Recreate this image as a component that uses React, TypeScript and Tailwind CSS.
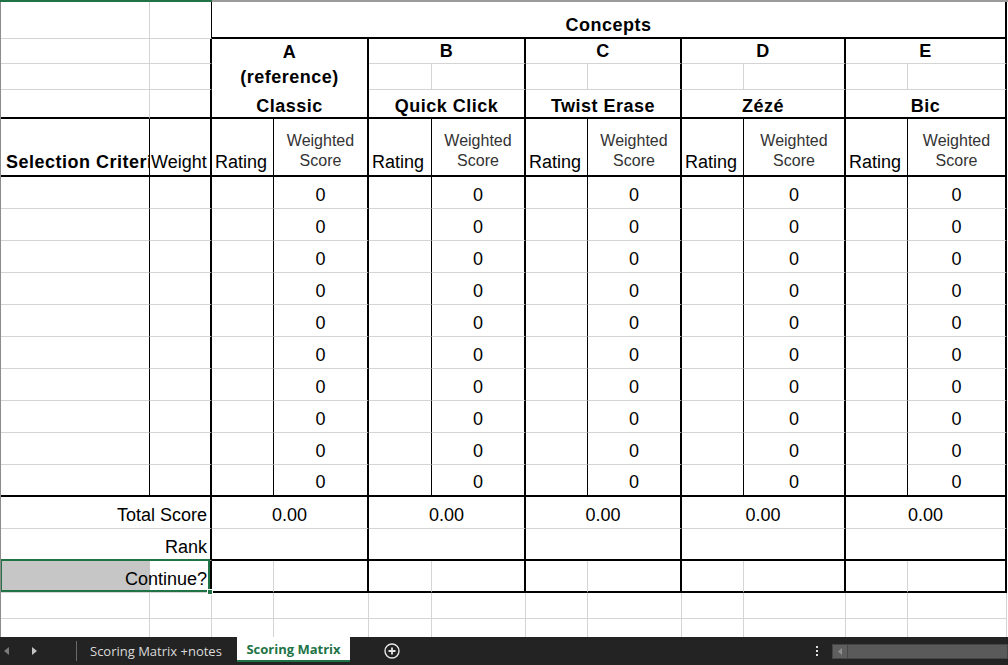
import React from "react";

const concepts = [
  { letter: "B", name: "Quick Click" },
  { letter: "C", name: "Twist Erase" },
  { letter: "D", name: "Zézé" },
  { letter: "E", name: "Bic" },
];

const Cell = ({ cls = "", children }: { cls?: string; children?: React.ReactNode }) => (
  <div className={`flex overflow-hidden whitespace-nowrap ${cls}`}>{children}</div>
);

const grey = "border-r border-b border-[#d4d4d4]";
const bold = "font-bold tracking-[0.5px]";

const App = () => {
  const rows = Array.from({ length: 10 });

  return (
    <div className="w-[1008px] h-[665px] overflow-hidden bg-white flex flex-col font-['Liberation_Sans',Arial,sans-serif] text-[18px] leading-[20px] text-black">
      {/* column header edge */}
      <div className="flex h-[2px] shrink-0">
        <div className="w-[212px] bg-[#217346]" />
        <div className="flex-1 bg-[#9b9b9b]" />
      </div>

      {/* sheet */}
      <div className="flex-1 overflow-hidden border-l border-[#8c8c8c]">
        <div className="grid grid-cols-[149px_62px_62px_95px_63px_94px_62px_94px_62px_102px_62px_99px] grid-rows-[37px_25px_26px_29px_58px_repeat(10,32px)_32px_32px_32px_26px_26px]">
          {/* row 1 */}
          <Cell cls={grey} />
          <Cell cls="border-b border-b-[#d4d4d4] border-r border-r-black" />
          <Cell cls={`col-span-10 border-r-2 border-b-2 border-black justify-center items-end pb-[2px] ${bold}`}>Concepts</Cell>

          {/* row 2 */}
          <Cell cls={grey} />
          <Cell cls="border-b border-b-[#d4d4d4] border-r-2 border-r-black" />
          <Cell cls={`col-span-2 row-span-3 border-r-2 border-b-2 border-black flex-col ${bold}`}>
            <div className="h-[25px] flex items-end justify-center pb-[2px]">A</div>
            <div className="h-[26px] flex items-end justify-center pb-[3px]">(reference)</div>
            <div className="h-[27px] flex items-end justify-center pb-[1px]">Classic</div>
          </Cell>
          {concepts.map((c) => (
            <Cell key={c.letter} cls={`col-span-2 border-r-2 border-r-black border-b border-b-[#d4d4d4] justify-center items-end pb-[2px] ${bold}`}>
              {c.letter}
            </Cell>
          ))}

          {/* row 3 */}
          <Cell cls={grey} />
          <Cell cls="border-b border-b-[#d4d4d4] border-r-2 border-r-black" />
          {concepts.map((c) => (
            <React.Fragment key={c.letter}>
              <Cell cls={grey} />
              <Cell cls="border-r-2 border-r-black border-b border-b-[#d4d4d4]" />
            </React.Fragment>
          ))}

          {/* row 4 */}
          <Cell cls="border-r border-r-[#d4d4d4] border-b-2 border-b-black" />
          <Cell cls="border-r-2 border-b-2 border-black" />
          {concepts.map((c) => (
            <Cell key={c.letter} cls={`col-span-2 border-r-2 border-b-2 border-black justify-center items-end pb-[1px] ${bold}`}>
              {c.name}
            </Cell>
          ))}

          {/* header */}
          <Cell cls={`border-r border-r-black border-b-2 border-b-black items-end pb-[3px] pl-[5px] ${bold}`}>Selection Criteria</Cell>
          <Cell cls="border-r-2 border-b-2 border-black items-end pb-[3px] pl-[1px]">Weight</Cell>
          {[0, 1, 2, 3, 4].map((i) => (
            <React.Fragment key={i}>
              <Cell cls="border-r border-b-2 border-black items-end pb-[3px] pl-[3px]">Rating</Cell>
              <Cell cls="border-r-2 border-b-2 border-black flex-col justify-end items-center pb-[4px] text-[16px] leading-[20px] text-[#333]">
                <span>Weighted</span>
                <span>Score</span>
              </Cell>
            </React.Fragment>
          ))}

          {/* data rows */}
          {rows.map((_, r) => {
            const last = r === rows.length - 1;
            const b = last ? "border-b-2 border-b-black" : "border-b border-b-[#d4d4d4]";
            return (
              <React.Fragment key={r}>
                <Cell cls={`border-r border-r-black ${b}`} />
                <Cell cls={`border-r-2 border-r-black ${b}`} />
                {[0, 1, 2, 3, 4].map((i) => (
                  <React.Fragment key={i}>
                    <Cell cls={`border-r border-r-black ${b}`} />
                    <Cell cls={`border-r-2 border-r-black ${b} justify-center items-end pb-[3px]`}>0</Cell>
                  </React.Fragment>
                ))}
              </React.Fragment>
            );
          })}

          {/* total score */}
          <Cell cls="col-span-2 border-r-2 border-r-black border-b border-b-[#d4d4d4] justify-end items-end pb-[3px] pr-[3px]">Total Score</Cell>
          {[0, 1, 2, 3, 4].map((i) => (
            <Cell key={i} cls="col-span-2 border-r-2 border-r-black border-b border-b-[#d4d4d4] justify-center items-end pb-[3px]">0.00</Cell>
          ))}

          {/* rank */}
          <Cell cls="col-span-2 border-r-2 border-r-black border-b border-b-[#d4d4d4] justify-end items-end pb-[3px] pr-[3px]">Rank</Cell>
          {[0, 1, 2, 3, 4].map((i) => (
            <Cell key={i} cls="col-span-2 border-r-2 border-r-black border-b-2 border-b-black" />
          ))}

          {/* continue */}
          <div className="col-span-2 relative flex justify-end items-end pb-[3px] pr-[3px] border-r-2 border-r-black border-b border-b-[#d4d4d4] bg-[linear-gradient(to_right,#c6c6c6_149px,#ffffff_149px)]">
            Continue?
            <div className="absolute -top-[2px] -left-px right-0 bottom-0 border-2 border-[#217346] z-10" />
            <div className="absolute -right-[3px] -bottom-[3px] w-[6px] h-[6px] bg-[#217346] border border-white z-20" />
          </div>
          {[0, 1, 2, 3, 4].map((i) => (
            <React.Fragment key={i}>
              <Cell cls="border-r border-r-[#d4d4d4] border-b-2 border-b-black" />
              <Cell cls="border-r-2 border-r-black border-b-2 border-b-black" />
            </React.Fragment>
          ))}

          {/* empty rows */}
          {[0, 1].map((r) => (
            <React.Fragment key={r}>
              {Array.from({ length: 12 }).map((_, i) => (
                <Cell key={i} cls={grey} />
              ))}
            </React.Fragment>
          ))}
        </div>
      </div>

      {/* sheet tabs */}
      <div className="h-[28px] shrink-0 bg-[#232323] flex items-center font-['Open_Sans',sans-serif] text-[13px]">
        <div className="w-[76px] h-full flex items-center">
          <svg width="6" height="8" viewBox="0 0 6 8" className="ml-[4px]">
            <path d="M5 0 L0 4 L5 8 Z" fill="#7b7b7b" />
          </svg>
          <svg width="6" height="8" viewBox="0 0 6 8" className="ml-[22px]">
            <path d="M0 0 L5 4 L0 8 Z" fill="#c4c4c4" />
          </svg>
        </div>
        <div className="w-px h-[20px] bg-[#6a6a6a]" />
        <div className="w-[160px] pl-[13px] text-[#dadada]">Scoring Matrix +notes</div>
        <div className="self-start h-[25px] w-[113px] bg-white border-b-2 border-[#217346] flex items-center justify-center font-bold text-[#217346]">
          Scoring Matrix
        </div>
        <div className="ml-[34px] flex items-center">
          <svg width="16" height="16" viewBox="0 0 16 16">
            <circle cx="8" cy="8" r="7" fill="none" stroke="#e6e6e6" strokeWidth="1.4" />
            <path d="M8 4.5 V11.5 M4.5 8 H11.5" stroke="#e6e6e6" strokeWidth="1.8" />
          </svg>
        </div>
        <div className="flex-1" />
        <div className="flex flex-col gap-[2px] mr-[14px]">
          <div className="w-[2px] h-[2px] bg-[#e0e0e0]" />
          <div className="w-[2px] h-[2px] bg-[#e0e0e0]" />
          <div className="w-[2px] h-[2px] bg-[#e0e0e0]" />
        </div>
        <div className="w-[176px] h-[15px] bg-[#5a5a5a] border border-[#454545] flex">
          <div className="w-[15px] h-full bg-[#5f5f5f] border-r border-[#474747] flex items-center justify-center">
            <svg width="4" height="7" viewBox="0 0 4 7">
              <path d="M4 0 L0 3.5 L4 7 Z" fill="#8f8f8f" />
            </svg>
          </div>
        </div>
      </div>
    </div>
  );
};

export default App;
